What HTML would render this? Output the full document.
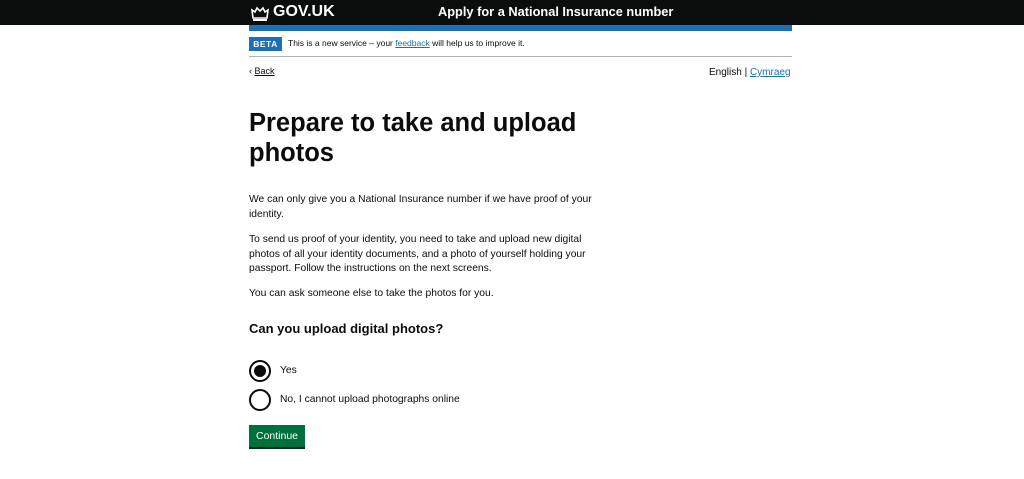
<!DOCTYPE html>
<html><head><style>
*{margin:0;padding:0;box-sizing:border-box}
body{width:1024px;height:479px;background:#fff;font-family:"Liberation Sans",Arial,sans-serif;color:#0b0c0c;position:relative;overflow:hidden}
.hdr{position:absolute;left:0;top:0;width:1024px;height:25px;background:#0b0c0c}
.blue{position:absolute;left:249px;top:25px;width:543px;height:6px;background:#1d70b8}
.a{position:absolute;white-space:nowrap}
a{color:#1d70b8}
p{position:absolute;left:249px;width:345px;font-size:10.3px;line-height:14.5px}
.rad{position:absolute;left:249px;width:22px;height:22px;border:2px solid #0b0c0c;border-radius:50%}
</style></head><body>
<div class="hdr"></div>
<svg class="a" style="left:250px;top:4px" width="20" height="17" viewBox="0 0 20 17"><path d="M2 6l3 2 2-4 3 3 3-3 2 4 3-2-1 8H3z" fill="none" stroke="#fff" stroke-width="1.6"/><path d="M3 16h14" stroke="#fff" stroke-width="2"/></svg>
<div class="a" style="left:273px;top:3px;color:#fff;font-weight:bold;font-size:16px">GOV.UK</div>
<div class="a" style="left:438px;top:4px;color:#fff;font-weight:bold;font-size:12.8px">Apply for a National Insurance number</div>
<div class="blue"></div>
<div class="a" style="left:249px;top:37px;width:33px;height:14px;background:#1d70b8;color:#fff;font-weight:bold;font-size:8.5px;text-align:center;line-height:14px;letter-spacing:.5px">BETA</div>
<div class="a" style="left:288px;top:38px;font-size:8.5px">This is a new service – your <a href="#">feedback</a> will help us to improve it.</div>
<div class="a" style="left:249px;top:56px;width:543px;height:1px;background:#b1b4b6"></div>
<div class="a" style="left:249px;top:66px;font-size:9px">‹ <a href="#" style="color:#0b0c0c">Back</a></div>
<div class="a" style="left:709px;top:67px;font-size:10px">English | <a href="#">Cymraeg</a></div>
<div class="a" style="left:249px;top:108px;font-size:25.5px;font-weight:bold;line-height:30px">Prepare to take and upload<br>photos</div>
<p style="top:193px">We can only give you a National Insurance number if we have proof of your identity.</p>
<p style="top:233px">To send us proof of your identity, you need to take and upload new digital photos of all your identity documents, and a photo of yourself holding your passport. Follow the instructions on the next screens.</p>
<p style="top:287px">You can ask someone else to take the photos for you.</p>
<div class="a" style="left:249px;top:321px;font-size:13px;font-weight:bold">Can you upload digital photos?</div>
<div class="rad" style="top:360px"><div style="position:absolute;left:3px;top:3px;width:12px;height:12px;border-radius:50%;background:#0b0c0c"></div></div>
<div class="a" style="left:280px;top:365px;font-size:10.3px">Yes</div>
<div class="rad" style="top:389px"></div>
<div class="a" style="left:280px;top:394px;font-size:10.3px">No, I cannot upload photographs online</div>
<div class="a" style="left:249px;top:425px;width:56px;height:22px;background:#00703c;color:#fff;font-size:10.5px;text-align:center;line-height:22px;box-shadow:0 2px 0 #002d18">Continue</div>
</body></html>
